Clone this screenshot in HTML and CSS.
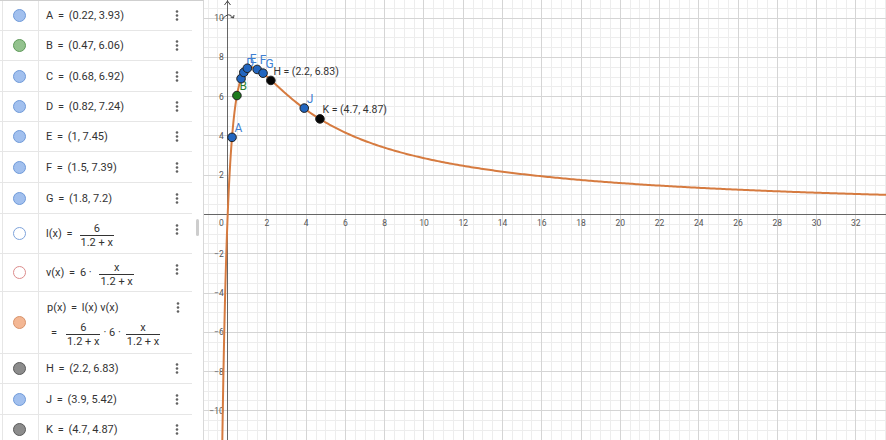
FILE: index.html
```html
<!DOCTYPE html>
<html>
<head>
<meta name="viewport" content="width=device-width, initial-scale=1">
<title>Graphing</title>
<link rel="stylesheet" href="styles.css">
</head>
<body>
  <div class="app">
    <aside class="algebra">
      <div class="list">
        <div class="row"><div class="marble-cell"><span class="marble blue"></span></div><div class="expr">A <span class="eq">=</span> (0.22, 3.93)</div><div class="more"><svg width="4" height="11"><circle cx="2" cy="1.5" r="1.3"/><circle cx="2" cy="5.5" r="1.3"/><circle cx="2" cy="9.5" r="1.3"/></svg></div></div>
        <div class="row"><div class="marble-cell"><span class="marble green"></span></div><div class="expr">B <span class="eq">=</span> (0.47, 6.06)</div><div class="more"><svg width="4" height="11"><circle cx="2" cy="1.5" r="1.3"/><circle cx="2" cy="5.5" r="1.3"/><circle cx="2" cy="9.5" r="1.3"/></svg></div></div>
        <div class="row row-odd"><div class="marble-cell"><span class="marble blue"></span></div><div class="expr">C <span class="eq">=</span> (0.68, 6.92)</div><div class="more"><svg width="4" height="11"><circle cx="2" cy="1.5" r="1.3"/><circle cx="2" cy="5.5" r="1.3"/><circle cx="2" cy="9.5" r="1.3"/></svg></div></div>
        <div class="row"><div class="marble-cell"><span class="marble blue"></span></div><div class="expr">D <span class="eq">=</span> (0.82, 7.24)</div><div class="more"><svg width="4" height="11"><circle cx="2" cy="1.5" r="1.3"/><circle cx="2" cy="5.5" r="1.3"/><circle cx="2" cy="9.5" r="1.3"/></svg></div></div>
        <div class="row"><div class="marble-cell"><span class="marble blue"></span></div><div class="expr">E <span class="eq">=</span> (1, 7.45)</div><div class="more"><svg width="4" height="11"><circle cx="2" cy="1.5" r="1.3"/><circle cx="2" cy="5.5" r="1.3"/><circle cx="2" cy="9.5" r="1.3"/></svg></div></div>
        <div class="row row-odd"><div class="marble-cell"><span class="marble blue"></span></div><div class="expr">F <span class="eq">=</span> (1.5, 7.39)</div><div class="more"><svg width="4" height="11"><circle cx="2" cy="1.5" r="1.3"/><circle cx="2" cy="5.5" r="1.3"/><circle cx="2" cy="9.5" r="1.3"/></svg></div></div>
        <div class="row row-odd"><div class="marble-cell"><span class="marble blue"></span></div><div class="expr">G <span class="eq">=</span> (1.8, 7.2)</div><div class="more"><svg width="4" height="11"><circle cx="2" cy="1.5" r="1.3"/><circle cx="2" cy="5.5" r="1.3"/><circle cx="2" cy="9.5" r="1.3"/></svg></div></div>
        <div class="row row-frac"><div class="marble-cell"><span class="marble ring-blue"></span></div>
          <div class="expr">l(x) <span class="eq">=</span> <span class="frac"><span class="num">6</span><span class="den">1.2 + x</span></span></div>
          <div class="more top"><svg width="4" height="11"><circle cx="2" cy="1.5" r="1.3"/><circle cx="2" cy="5.5" r="1.3"/><circle cx="2" cy="9.5" r="1.3"/></svg></div></div>
        <div class="row row-frac2"><div class="marble-cell"><span class="marble ring-red"></span></div>
          <div class="expr">v(x) <span class="eq">=</span> 6 · <span class="frac"><span class="num">x</span><span class="den">1.2 + x</span></span></div>
          <div class="more top"><svg width="4" height="11"><circle cx="2" cy="1.5" r="1.3"/><circle cx="2" cy="5.5" r="1.3"/><circle cx="2" cy="9.5" r="1.3"/></svg></div></div>
        <div class="row row-tall"><div class="marble-cell"><span class="marble orange"></span></div>
          <div class="expr stack">
            <div class="line">p(x) <span class="eq">=</span> l(x) v(x)</div>
            <div class="line second"><span class="eq">=</span> <span class="frac"><span class="num">6</span><span class="den">1.2 + x</span></span>· 6 ·<span class="frac"><span class="num">x</span><span class="den">1.2 + x</span></span></div>
          </div>
          <div class="more top"><svg width="4" height="11"><circle cx="2" cy="1.5" r="1.3"/><circle cx="2" cy="5.5" r="1.3"/><circle cx="2" cy="9.5" r="1.3"/></svg></div></div>
        <div class="row"><div class="marble-cell"><span class="marble gray"></span></div><div class="expr">H <span class="eq">=</span> (2.2, 6.83)</div><div class="more"><svg width="4" height="11"><circle cx="2" cy="1.5" r="1.3"/><circle cx="2" cy="5.5" r="1.3"/><circle cx="2" cy="9.5" r="1.3"/></svg></div></div>
        <div class="row row-odd"><div class="marble-cell"><span class="marble blue"></span></div><div class="expr">J <span class="eq">=</span> (3.9, 5.42)</div><div class="more"><svg width="4" height="11"><circle cx="2" cy="1.5" r="1.3"/><circle cx="2" cy="5.5" r="1.3"/><circle cx="2" cy="9.5" r="1.3"/></svg></div></div>
        <div class="row"><div class="marble-cell"><span class="marble gray"></span></div><div class="expr">K <span class="eq">=</span> (4.7, 4.87)</div><div class="more"><svg width="4" height="11"><circle cx="2" cy="1.5" r="1.3"/><circle cx="2" cy="5.5" r="1.3"/><circle cx="2" cy="9.5" r="1.3"/></svg></div></div>
      </div>
      <div class="scroll"><span class="thumb"></span></div>
    </aside>
    <main class="graphics">
      <svg id="plot" width="682" height="440"></svg>
    </main>
  </div>
  <script src="script.js"></script>
</body>
</html>
```

FILE: styles.css
```css
body {
  margin: 0;
  font-family: Roboto, "Liberation Sans", sans-serif;
  font-size: 11px;
  color: #333;
  background: #fff;
}

.app {
  display: flex;
  width: 886px;
  height: 440px;
  overflow: hidden;
}

.algebra {
  display: flex;
  width: 204px;
  flex: none;
  box-sizing: border-box;
  border-top: 1px solid #cfcfcf;
  border-right: 1px solid #d8d8d8;
}

.list {
  width: 192px;
}

.row {
  display: flex;
  height: 30px;
  box-sizing: border-box;
  border-bottom: 1px solid #e6e6e6;
  padding-left: 2px;
}

.row-odd {
  height: 31px;
}

.row-frac {
  height: 40px;
}

.row-frac2 {
  height: 38px;
}

.row-tall {
  height: 62px;
}

.marble-cell {
  width: 37px;
  flex: none;
  box-sizing: border-box;
  border-left: 1px solid #e6e6e6;
  border-right: 1px solid #e6e6e6;
  padding-right: 2px;
  display: flex;
  align-items: center;
  justify-content: center;
}

.marble {
  width: 13px;
  height: 13px;
  box-sizing: border-box;
  border-radius: 50%;
  border: 1px solid #6d98d8;
}

.marble.blue { background: #a2c0ee; border-color: #6f9ad9; }
.marble.green { background: #93c28e; border-color: #5f9a5a; }
.marble.orange { background: #f3b794; border-color: #d8936b; }
.marble.gray { background: #8c8c8c; border-color: #5a5a5a; }
.marble.ring-blue { background: #fff; border-color: #7ea3db; }
.marble.ring-red { background: #fff; border-color: #dc8c8c; }

.expr {
  flex: 1;
  display: flex;
  align-items: center;
  padding-left: 7px;
  white-space: pre;
}

.eq {
  margin: 0 2px;
}

.frac {
  display: inline-flex;
  flex-direction: column;
  align-items: center;
  margin: 0 3px 0 5px;
  position: relative;
  top: 2px;
}

.num {
  line-height: 13px;
}

.den {
  line-height: 13px;
  border-top: 1px solid #333;
  padding: 0 1px;
}

.stack {
  flex-direction: column;
  align-items: flex-start;
  padding-top: 9px;
}

.line {
  display: flex;
  align-items: center;
  line-height: 13px;
  padding-left: 1px;
}

.line.second {
  margin-top: 5px;
  padding-left: 3px;
}

.line.second .eq {
  margin-right: 4px;
}

.more {
  width: 30px;
  flex: none;
  display: flex;
  align-items: center;
  justify-content: center;
}

.more.top {
  align-items: flex-start;
  padding-top: 10px;
}

.more svg {
  fill: #616161;
}

.scroll {
  width: 11px;
  padding-top: 218px;
}

.thumb {
  display: block;
  width: 3px;
  height: 17px;
  margin-left: 4px;
  border-radius: 2px;
  background: #cdcdcd;
}

.graphics {
  flex: 1;
  background: #fff;
}

#plot {
  display: block;
  font-family: Roboto, "Liberation Sans", sans-serif;
}

.minor { stroke: #ededed; shape-rendering: crispEdges; }
.major { stroke: #d5d5d5; shape-rendering: crispEdges; }
.axis { stroke: #666; shape-rendering: crispEdges; }

.tick-label {
  font-size: 8.5px;
  fill: #555;
}

.curve {
  fill: none;
  stroke: #d67b40;
  stroke-width: 2;
  stroke-linejoin: round;
}

.pt { stroke: #1f1f1f; stroke-width: 1; }
.pt.blue { fill: #2266c0; }
.pt.green { fill: #1d7a1d; }
.pt.black { fill: #050505; }

.pt-label {
  font-size: 12px;
}

.pt-label.blue { fill: #3f7fd2; }
.pt-label.green { fill: #2b7f2b; }
.pt-label.black { fill: #333; font-size: 10.5px; }

.rot {
  fill: none;
  stroke: #444;
  stroke-width: 1;
}
```

FILE: script.js
```js
var NS = 'http://www.w3.org/2000/svg';
var svg = document.getElementById('plot');
var W = 682, H = 440;
var ox = 23.7, oy = 214.5, s = 19.63;

function add(tag, attrs, text) {
  var e = document.createElementNS(NS, tag);
  for (var k in attrs) e.setAttribute(k, attrs[k]);
  if (text != null) e.textContent = text;
  svg.appendChild(e);
  return e;
}

function px(x) { return ox + x * s; }
function py(y) { return oy - y * s; }
function crisp(v) { return Math.floor(v) + 0.5; }

// grid, minor first then major on top
[false, true].forEach(function (wantMajor) {
  for (var k = -6; k <= 140; k++) {
    var major = k % 4 === 0;
    if (major !== wantMajor) continue;
    var x = crisp(px(k / 2));
    if (x < 0 || x > W) continue;
    add('line', { x1: x, y1: 0, x2: x, y2: H, 'class': major ? 'major' : 'minor' });
  }
  for (var k = -24; k <= 24; k++) {
    var major = k % 4 === 0;
    if (major !== wantMajor) continue;
    var y = crisp(py(k / 2));
    if (y < 0 || y > H) continue;
    add('line', { x1: 0, y1: y, x2: W, y2: y, 'class': major ? 'major' : 'minor' });
  }
});

// axes
var ax = crisp(ox), ay = crisp(oy);
add('line', { x1: 0, y1: ay, x2: W, y2: ay, 'class': 'axis' });
add('line', { x1: ax, y1: 0, x2: ax, y2: H, 'class': 'axis' });
add('path', { d: 'M' + (ax - 3) + ' 5 L' + ax + ' 1 L' + (ax + 3) + ' 5', 'class': 'rot' });

// tick labels
for (var n = 2; n <= 32; n += 2) {
  add('text', { x: px(n), y: oy + 11, 'text-anchor': 'middle', 'class': 'tick-label' }, String(n));
}
add('text', { x: ox - 4, y: oy + 11, 'text-anchor': 'end', 'class': 'tick-label' }, '0');
for (var n = -10; n <= 10; n += 2) {
  if (n === 0) continue;
  var t = n < 0 ? '\u2212' + (-n) : String(n);
  add('text', { x: ox - 4, y: py(n) + 3, 'text-anchor': 'end', 'class': 'tick-label' }, t);
}

// little rotate arrow near the top of the y axis
add('path', { d: 'M' + (ax - 5) + ' 19 Q' + (ax + 1) + ' 11 ' + (ax + 6) + ' 18', 'class': 'rot' });
add('path', { d: 'M' + (ax + 3) + ' 17 L' + (ax + 6) + ' 18 L' + (ax + 6.5) + ' 15', 'class': 'rot' });

// p(x) = 36x / (1.2 + x)^2
var d = '';
var x = -0.2755;
while (x <= 35) {
  var y = 36 * x / ((1.2 + x) * (1.2 + x));
  d += (d ? 'L' : 'M') + px(x).toFixed(2) + ' ' + py(y).toFixed(2) + ' ';
  x += x < 3 ? 0.005 : 0.1;
}
add('path', { d: d, 'class': 'curve' });

var points = [
  { n: 'A', x: 0.22, y: 3.93, c: 'blue' },
  { n: 'B', x: 0.47, y: 6.06, c: 'green' },
  { n: 'C', x: 0.68, y: 6.92, c: 'blue', hide: true },
  { n: 'D', x: 0.82, y: 7.24, c: 'blue' },
  { n: 'E', x: 1, y: 7.45, c: 'blue' },
  { n: 'F', x: 1.5, y: 7.39, c: 'blue' },
  { n: 'G', x: 1.8, y: 7.2, c: 'blue' },
  { n: 'H = (2.2, 6.83)', x: 2.2, y: 6.83, c: 'black' },
  { n: 'J', x: 3.9, y: 5.42, c: 'blue' },
  { n: 'K = (4.7, 4.87)', x: 4.7, y: 4.87, c: 'black' }
];

points.forEach(function (p) {
  if (p.hide) return;
  add('text', { x: px(p.x) + 2.5, y: py(p.y) - 5.5, 'class': 'pt-label ' + p.c }, p.n);
});
points.forEach(function (p) {
  add('circle', { cx: px(p.x), cy: py(p.y), r: 4.3, 'class': 'pt ' + p.c });
});
```
